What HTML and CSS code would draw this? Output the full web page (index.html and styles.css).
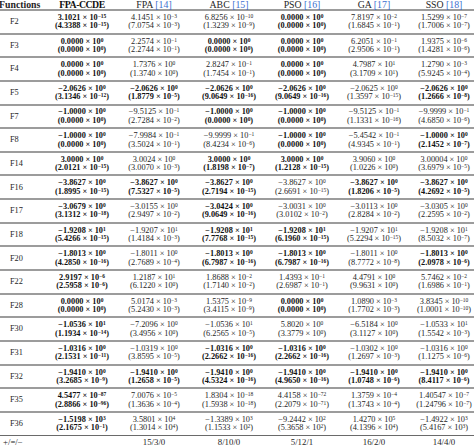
FILE: index.html
```html
<!DOCTYPE html>
<html>
<head>
<meta charset="utf-8">
<link rel="stylesheet" href="styles.css">
</head>
<body>
<div class="tbl">
  <div class="row head">
    <div class="c fn"><span>Functions</span></div>
    <div class="c b"><span>FPA-CCDE</span></div>
    <div class="c"><span>FPA <span class="ref">[14]</span></span></div>
    <div class="c"><span>ABC <span class="ref">[15]</span></span></div>
    <div class="c"><span>PSO <span class="ref">[16]</span></span></div>
    <div class="c"><span>GA <span class="ref">[17]</span></span></div>
    <div class="c"><span>SSO <span class="ref">[18]</span></span></div>
  </div>

  <div class="row">
    <div class="c fn">F2</div>
    <div class="c b"><div>3.1021 × 10<sup>−15</sup></div><div>(4.3388 × 10<sup>−15</sup>)</div></div>
    <div class="c"><div>4.1451 × 10<sup>−3</sup></div><div>(7.0754 × 10<sup>−3</sup>)</div></div>
    <div class="c"><div>6.8256 × 10<sup>−10</sup></div><div>(1.3239 × 10<sup>−9</sup>)</div></div>
    <div class="c b"><div>0.0000 × 10<sup>0</sup></div><div>(0.0000 × 10<sup>0</sup>)</div></div>
    <div class="c"><div>7.8197 × 10<sup>−2</sup></div><div>(1.6845 × 10<sup>−1</sup>)</div></div>
    <div class="c"><div>1.5299 × 10<sup>−7</sup></div><div>(1.7006 × 10<sup>−7</sup>)</div></div>
  </div>

  <div class="row">
    <div class="c fn">F3</div>
    <div class="c b"><div>0.0000 × 10<sup>0</sup></div><div>(0.0000 × 10<sup>0</sup>)</div></div>
    <div class="c"><div>2.2574 × 10<sup>−1</sup></div><div>(2.2744 × 10<sup>−1</sup>)</div></div>
    <div class="c b"><div>0.0000 × 10<sup>0</sup></div><div>(0.0000 × 10<sup>0</sup>)</div></div>
    <div class="c b"><div>0.0000 × 10<sup>0</sup></div><div>(0.0000 × 10<sup>0</sup>)</div></div>
    <div class="c"><div>6.2051 × 10<sup>−1</sup></div><div>(2.9506 × 10<sup>−1</sup>)</div></div>
    <div class="c"><div>1.9375 × 10<sup>−6</sup></div><div>(1.4281 × 10<sup>−6</sup>)</div></div>
  </div>

  <div class="row">
    <div class="c fn">F4</div>
    <div class="c b"><div>0.0000 × 10<sup>0</sup></div><div>(0.0000 × 10<sup>0</sup>)</div></div>
    <div class="c"><div>1.7376 × 10<sup>0</sup></div><div>(1.3740 × 10<sup>0</sup>)</div></div>
    <div class="c"><div>2.8247 × 10<sup>−1</sup></div><div>(1.7454 × 10<sup>−1</sup>)</div></div>
    <div class="c b"><div>0.0000 × 10<sup>0</sup></div><div>(0.0000 × 10<sup>0</sup>)</div></div>
    <div class="c"><div>4.7987 × 10<sup>1</sup></div><div>(3.1709 × 10<sup>1</sup>)</div></div>
    <div class="c"><div>1.2790 × 10<sup>−3</sup></div><div>(5.9245 × 10<sup>−4</sup>)</div></div>
  </div>

  <div class="row">
    <div class="c fn">F5</div>
    <div class="c b"><div>−2.0626 × 10<sup>0</sup></div><div>(3.1346 × 10<sup>−12</sup>)</div></div>
    <div class="c b"><div>−2.0626 × 10<sup>0</sup></div><div>(1.8779 × 10<sup>−5</sup>)</div></div>
    <div class="c b"><div>−2.0626 × 10<sup>0</sup></div><div>(9.0649 × 10<sup>−16</sup>)</div></div>
    <div class="c b"><div>−2.0626 × 10<sup>0</sup></div><div>(9.0649 × 10<sup>−16</sup>)</div></div>
    <div class="c"><div>−2.0625 × 10<sup>0</sup></div><div>(1.3597 × 10<sup>−15</sup>)</div></div>
    <div class="c b"><div>−2.0626 × 10<sup>0</sup></div><div>(1.2666 × 10<sup>−8</sup>)</div></div>
  </div>

  <div class="row">
    <div class="c fn">F7</div>
    <div class="c b"><div>−1.0000 × 10<sup>0</sup></div><div>(0.0000 × 10<sup>0</sup>)</div></div>
    <div class="c"><div>−9.5125 × 10<sup>−1</sup></div><div>(2.7284 × 10<sup>−2</sup>)</div></div>
    <div class="c b"><div>−1.0000 × 10<sup>0</sup></div><div>(0.0000 × 10<sup>0</sup>)</div></div>
    <div class="c b"><div>−1.0000 × 10<sup>0</sup></div><div>(0.0000 × 10<sup>0</sup>)</div></div>
    <div class="c"><div>−9.5125 × 10<sup>−1</sup></div><div>(1.1331 × 10<sup>−16</sup>)</div></div>
    <div class="c"><div>−9.9999 × 10<sup>−1</sup></div><div>(4.6850 × 10<sup>−6</sup>)</div></div>
  </div>

  <div class="row">
    <div class="c fn">F8</div>
    <div class="c b"><div>−1.0000 × 10<sup>0</sup></div><div>(0.0000 × 10<sup>0</sup>)</div></div>
    <div class="c"><div>−7.9984 × 10<sup>−1</sup></div><div>(3.5024 × 10<sup>−1</sup>)</div></div>
    <div class="c"><div>−9.9999 × 10<sup>−1</sup></div><div>(8.4234 × 10<sup>−6</sup>)</div></div>
    <div class="c b"><div>−1.0000 × 10<sup>0</sup></div><div>(0.0000 × 10<sup>0</sup>)</div></div>
    <div class="c"><div>−5.4542 × 10<sup>−1</sup></div><div>(4.9345 × 10<sup>−1</sup>)</div></div>
    <div class="c b"><div>−1.0000 × 10<sup>0</sup></div><div>(2.1452 × 10<sup>−7</sup>)</div></div>
  </div>

  <div class="row">
    <div class="c fn">F14</div>
    <div class="c b"><div>3.0000 × 10<sup>0</sup></div><div>(2.0121 × 10<sup>−15</sup>)</div></div>
    <div class="c"><div>3.0024 × 10<sup>0</sup></div><div>(3.0070 × 10<sup>−3</sup>)</div></div>
    <div class="c b"><div>3.0000 × 10<sup>0</sup></div><div>(1.8198 × 10<sup>−7</sup>)</div></div>
    <div class="c b"><div>3.0000 × 10<sup>0</sup></div><div>(1.2128 × 10<sup>−15</sup>)</div></div>
    <div class="c"><div>3.9060 × 10<sup>0</sup></div><div>(1.0226 × 10<sup>0</sup>)</div></div>
    <div class="c"><div>3.00004 × 10<sup>0</sup></div><div>(3.6979 × 10<sup>−5</sup>)</div></div>
  </div>

  <div class="row">
    <div class="c fn">F16</div>
    <div class="c b"><div>−3.8627 × 10<sup>0</sup></div><div>(1.8995 × 10<sup>−15</sup>)</div></div>
    <div class="c b"><div>−3.8627 × 10<sup>0</sup></div><div>(7.5327 × 10<sup>−5</sup>)</div></div>
    <div class="c b"><div>−3.8627 × 10<sup>0</sup></div><div>(2.7194 × 10<sup>−15</sup>)</div></div>
    <div class="c"><div>−3.8627 × 10<sup>0</sup></div><div>(2.6691 × 10<sup>−15</sup>)</div></div>
    <div class="c b"><div>−3.8627 × 10<sup>0</sup></div><div>(1.8206 × 10<sup>−5</sup>)</div></div>
    <div class="c b"><div>−3.8627 × 10<sup>0</sup></div><div>(4.2692 × 10<sup>−5</sup>)</div></div>
  </div>

  <div class="row">
    <div class="c fn">F17</div>
    <div class="c b"><div>−3.0679 × 10<sup>0</sup></div><div>(3.1312 × 10<sup>−18</sup>)</div></div>
    <div class="c"><div>−3.0155 × 10<sup>0</sup></div><div>(2.9497 × 10<sup>−2</sup>)</div></div>
    <div class="c b"><div>−3.0424 × 10<sup>0</sup></div><div>(9.0649 × 10<sup>−16</sup>)</div></div>
    <div class="c"><div>−3.0031 × 10<sup>0</sup></div><div>(3.0102 × 10<sup>−2</sup>)</div></div>
    <div class="c"><div>−3.0113 × 10<sup>0</sup></div><div>(2.8284 × 10<sup>−2</sup>)</div></div>
    <div class="c"><div>−3.0305 × 10<sup>0</sup></div><div>(2.2595 × 10<sup>−2</sup>)</div></div>
  </div>

  <div class="row">
    <div class="c fn">F18</div>
    <div class="c b"><div>−1.9208 × 10<sup>1</sup></div><div>(5.4266 × 10<sup>−15</sup>)</div></div>
    <div class="c"><div>−1.9207 × 10<sup>1</sup></div><div>(1.4184 × 10<sup>−3</sup>)</div></div>
    <div class="c b"><div>−1.9208 × 10<sup>1</sup></div><div>(7.7768 × 10<sup>−15</sup>)</div></div>
    <div class="c b"><div>−1.9208 × 10<sup>1</sup></div><div>(6.1960 × 10<sup>−15</sup>)</div></div>
    <div class="c"><div>−1.9207 × 10<sup>1</sup></div><div>(5.2294 × 10<sup>−15</sup>)</div></div>
    <div class="c"><div>−1.9208 × 10<sup>1</sup></div><div>(8.5032 × 10<sup>−7</sup>)</div></div>
  </div>

  <div class="row">
    <div class="c fn">F20</div>
    <div class="c b"><div>−1.8013 × 10<sup>0</sup></div><div>(4.2850 × 10<sup>−16</sup>)</div></div>
    <div class="c"><div>−1.8011 × 10<sup>0</sup></div><div>(2.7689 × 10<sup>−4</sup>)</div></div>
    <div class="c b"><div>−1.8013 × 10<sup>0</sup></div><div>(6.7987 × 10<sup>−16</sup>)</div></div>
    <div class="c b"><div>−1.8013 × 10<sup>0</sup></div><div>(6.7987 × 10<sup>−16</sup>)</div></div>
    <div class="c"><div>−1.8011 × 10<sup>0</sup></div><div>(8.7772 × 10<sup>−8</sup>)</div></div>
    <div class="c b"><div>−1.8013 × 10<sup>0</sup></div><div>(2.0978 × 10<sup>−6</sup>)</div></div>
  </div>

  <div class="row">
    <div class="c fn">F22</div>
    <div class="c b"><div>2.9197 × 10<sup>−6</sup></div><div>(2.5958 × 10<sup>−6</sup>)</div></div>
    <div class="c"><div>1.2187 × 10<sup>1</sup></div><div>(6.1220 × 10<sup>0</sup>)</div></div>
    <div class="c"><div>1.8688 × 10<sup>−2</sup></div><div>(1.7140 × 10<sup>−2</sup>)</div></div>
    <div class="c"><div>1.4393 × 10<sup>−1</sup></div><div>(2.6987 × 10<sup>−1</sup>)</div></div>
    <div class="c"><div>4.4791 × 10<sup>0</sup></div><div>(9.9631 × 10<sup>0</sup>)</div></div>
    <div class="c"><div>5.7462 × 10<sup>−2</sup></div><div>(1.6986 × 10<sup>−1</sup>)</div></div>
  </div>

  <div class="row">
    <div class="c fn">F28</div>
    <div class="c b"><div>0.0000 × 10<sup>0</sup></div><div>(0.0000 × 10<sup>0</sup>)</div></div>
    <div class="c"><div>5.0174 × 10<sup>−3</sup></div><div>(5.2430 × 10<sup>−3</sup>)</div></div>
    <div class="c"><div>1.5375 × 10<sup>−9</sup></div><div>(3.4115 × 10<sup>−9</sup>)</div></div>
    <div class="c b"><div>0.0000 × 10<sup>0</sup></div><div>(0.0000 × 10<sup>0</sup>)</div></div>
    <div class="c"><div>1.0890 × 10<sup>−3</sup></div><div>(1.7702 × 10<sup>−3</sup>)</div></div>
    <div class="c"><div>3.8345 × 10<sup>−10</sup></div><div>(1.0001 × 10<sup>−10</sup>)</div></div>
  </div>

  <div class="row">
    <div class="c fn">F30</div>
    <div class="c b"><div>−1.0536 × 10<sup>1</sup></div><div>(1.1934 × 10<sup>−14</sup>)</div></div>
    <div class="c"><div>−7.2096 × 10<sup>0</sup></div><div>(3.4956 × 10<sup>0</sup>)</div></div>
    <div class="c"><div>−1.0536 × 10<sup>1</sup></div><div>(6.2565 × 10<sup>−5</sup>)</div></div>
    <div class="c"><div>5.8020 × 10<sup>0</sup></div><div>(3.3779 × 10<sup>0</sup>)</div></div>
    <div class="c"><div>−6.5184 × 10<sup>0</sup></div><div>(3.1127 × 10<sup>0</sup>)</div></div>
    <div class="c"><div>−1.0533 × 10<sup>1</sup></div><div>(1.5542 × 10<sup>−3</sup>)</div></div>
  </div>

  <div class="row">
    <div class="c fn">F31</div>
    <div class="c b"><div>−1.0316 × 10<sup>0</sup></div><div>(2.1531 × 10<sup>−11</sup>)</div></div>
    <div class="c"><div>−1.0319 × 10<sup>0</sup></div><div>(3.8595 × 10<sup>−5</sup>)</div></div>
    <div class="c b"><div>−1.0316 × 10<sup>0</sup></div><div>(2.2662 × 10<sup>−16</sup>)</div></div>
    <div class="c b"><div>−1.0316 × 10<sup>0</sup></div><div>(2.2662 × 10<sup>−16</sup>)</div></div>
    <div class="c"><div>−1.0302 × 10<sup>0</sup></div><div>(1.2697 × 10<sup>−3</sup>)</div></div>
    <div class="c"><div>−1.0316 × 10<sup>0</sup></div><div>(1.1275 × 10<sup>−6</sup>)</div></div>
  </div>

  <div class="row">
    <div class="c fn">F32</div>
    <div class="c b"><div>−1.9410 × 10<sup>0</sup></div><div>(3.2685 × 10<sup>−9</sup>)</div></div>
    <div class="c b"><div>−1.9410 × 10<sup>0</sup></div><div>(1.2658 × 10<sup>−5</sup>)</div></div>
    <div class="c b"><div>−1.9410 × 10<sup>0</sup></div><div>(4.5324 × 10<sup>−16</sup>)</div></div>
    <div class="c b"><div>−1.9410 × 10<sup>0</sup></div><div>(4.9650 × 10<sup>−16</sup>)</div></div>
    <div class="c b"><div>−1.9410 × 10<sup>0</sup></div><div>(1.0748 × 10<sup>−6</sup>)</div></div>
    <div class="c b"><div>−1.9410 × 10<sup>0</sup></div><div>(8.4117 × 10<sup>−6</sup>)</div></div>
  </div>

  <div class="row">
    <div class="c fn">F35</div>
    <div class="c b"><div>4.5477 × 10<sup>−87</sup></div><div>(2.8866 × 10<sup>−96</sup>)</div></div>
    <div class="c"><div>7.0076 × 10<sup>−5</sup></div><div>(1.3636 × 10<sup>−4</sup>)</div></div>
    <div class="c"><div>1.8304 × 10<sup>−18</sup></div><div>(1.5938 × 10<sup>−18</sup>)</div></div>
    <div class="c"><div>4.4158 × 10<sup>−72</sup></div><div>(2.2079 × 10<sup>−71</sup>)</div></div>
    <div class="c"><div>1.3759 × 10<sup>−4</sup></div><div>(1.3743 × 10<sup>−4</sup>)</div></div>
    <div class="c"><div>1.40547 × 10<sup>−7</sup></div><div>(1.24796 × 10<sup>−7</sup>)</div></div>
  </div>

  <div class="row last">
    <div class="c fn">F36</div>
    <div class="c b"><div>−1.5198 × 10<sup>3</sup></div><div>(2.1675 × 10<sup>−1</sup>)</div></div>
    <div class="c"><div>3.5801 × 10<sup>4</sup></div><div>(1.3014 × 10<sup>4</sup>)</div></div>
    <div class="c"><div>−1.3389 × 10<sup>3</sup></div><div>(1.1533 × 10<sup>2</sup>)</div></div>
    <div class="c"><div>−9.2442 × 10<sup>2</sup></div><div>(5.3658 × 10<sup>2</sup>)</div></div>
    <div class="c"><div>1.4270 × 10<sup>5</sup></div><div>(4.1396 × 10<sup>4</sup>)</div></div>
    <div class="c"><div>−1.4922 × 10<sup>3</sup></div><div>(5.4167 × 10<sup>3</sup>)</div></div>
  </div>

  <div class="row foot">
    <div class="c fn"><span>+/=/−</span></div>
    <div class="c"></div>
    <div class="c"><span>15/3/0</span></div>
    <div class="c"><span>8/10/0</span></div>
    <div class="c"><span>5/12/1</span></div>
    <div class="c"><span>16/2/0</span></div>
    <div class="c"><span>14/4/0</span></div>
  </div>
</div>
</body>
</html>
```

FILE: styles.css
```css
html {
  overflow: hidden;
  background: #ffffff;
}
body {
  margin: 0;
  width: 474px;
  height: 446px;
  overflow: hidden;
  background: #ffffff;
  color: #262626;
  font-family: "Liberation Serif", "Times New Roman", serif;
  font-size: 8.3px;
}
.tbl {
  width: 478px;
}
.row {
  display: grid;
  grid-template-columns: 48px 68px 76px 74px 72px 72px 68px;
  box-sizing: border-box;
  height: 23.65px;
  border-bottom: 2px solid #9c9c9c;
}
.row.head {
  height: 11px;
  font-size: 9.8px;
}
.row.last {
  border-bottom-color: #6a6a6a;
  border-bottom-width: 1px;
  height: 23.15px;
}
.row.foot {
  height: 12px;
  border-bottom: none;
  font-size: 8.8px;
}
.c {
  display: flex;
  flex-direction: column;
  justify-content: center;
  align-items: center;
  text-align: center;
  line-height: 8.4px;
  white-space: nowrap;
  padding-top: 1px;
}
.head .c {
  line-height: 9px;
  padding-top: 0;
}
.foot .c {
  line-height: 9px;
  padding-top: 1px;
}
.c.fn {
  align-items: flex-start;
  padding-left: 10px;
}
.head .c.fn {
  padding-left: 0;
  margin-left: -1px;
  font-weight: bold;
}
.foot .c.fn {
  padding-left: 3px;
}
.c.b {
  font-weight: bold;
  color: #111111;
}
.head .c.b {
  letter-spacing: -0.5px;
}
.ref {
  color: #3c6fd0;
}
sup {
  font-size: 0.66em;
  line-height: 0;
  vertical-align: 0.44em;
}
```
